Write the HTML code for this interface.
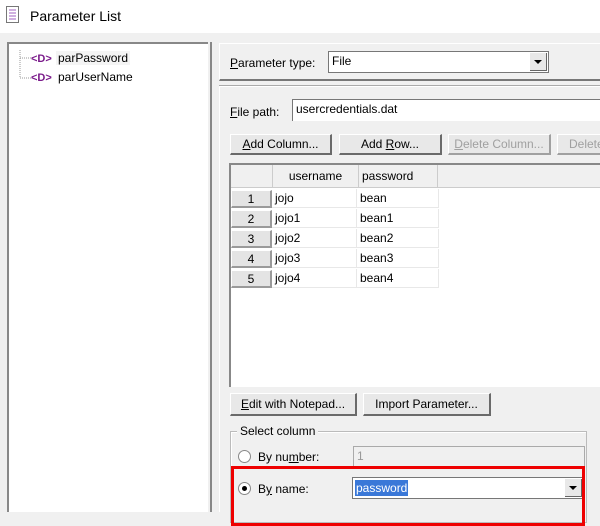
<!DOCTYPE html>
<html><head><style>
body{margin:0;width:600px;height:511px;overflow:hidden;background:#f0f0f0;font-family:"Liberation Sans",sans-serif;font-size:12px;color:#000;position:relative}
.a{position:absolute;white-space:nowrap}
.btn{position:absolute;white-space:nowrap;overflow:hidden;height:21px;background:#e8e8e8;border:1px solid #fff;border-right:2px solid #6a6a6a;border-bottom:2px solid #6a6a6a;box-sizing:border-box;text-align:center;line-height:18px;font-size:12px}
.dis{color:#a0a0a0;border-right-color:#a0a0a0;border-bottom-color:#a0a0a0}
u{text-decoration:underline}
.cell{position:absolute;height:19px;line-height:19px;border-right:1px solid #e8e8e8;border-bottom:1px solid #e8e8e8;box-sizing:border-box;padding-left:3px}
.rh{position:absolute;left:231px;width:41px;height:18px;background:#e4e4e4;border:1px solid #fff;border-right:2px solid #9a9a9a;border-bottom:2px solid #9a9a9a;box-sizing:border-box;text-align:center;line-height:16px;font-size:12px}
</style></head><body>
<div class="a" style="left:0;top:0;width:600px;height:33px;background:#fff"></div>
<svg class="a" style="left:6px;top:6px" width="14" height="18"><rect x="0.5" y="0.5" width="12" height="16" fill="#fff" stroke="#777"/><path d="M3 4h7M3 7h7M3 10h7M3 13h7" stroke="#a060c0"/></svg>
<div class="a" style="left:30px;top:8px;font-size:14px">Parameter List</div>
<div class="a" style="left:7px;top:42px;width:201px;height:470px;background:#fff;border-left:2px solid #888;border-top:2px solid #888;box-sizing:border-box"></div>
<div class="a" style="left:210px;top:42px;width:2px;height:470px;background:#888"></div>
<svg class="a" style="left:18px;top:50px" width="40" height="34"><path d="M2 0v28h12M2 8h12" stroke="#999" stroke-dasharray="1 1" fill="none"/><text x="13" y="12" font-size="11" font-weight="bold" fill="#7a1a8a" font-family="Liberation Sans">&lt;D&gt;</text><text x="13" y="31" font-size="11" font-weight="bold" fill="#7a1a8a" font-family="Liberation Sans">&lt;D&gt;</text></svg>
<div class="a" style="left:56px;top:51px;background:#f4f4f4;padding:0 2px">parPassword</div>
<div class="a" style="left:58px;top:70px">parUserName</div>
<div class="a" style="left:219px;top:43px;width:381px;height:35px;border-top:1px solid #fff;border-left:1px solid #fff;border-bottom:2px solid #777"></div>
<div class="a" style="left:230px;top:56px"><u>P</u>arameter type:</div>
<div class="a" style="left:328px;top:51px;width:221px;height:22px;background:#fff;border:1px solid #777;box-sizing:border-box;padding:2px 3px">File</div>
<div class="a" style="left:530px;top:53px;width:17px;height:18px;background:#e8e8e8;border-right:1px solid #666;border-bottom:1px solid #666;box-sizing:border-box"></div>
<div class="a" style="left:534px;top:60px;width:0;height:0;border-left:4px solid transparent;border-right:4px solid transparent;border-top:4px solid #000"></div>
<div class="a" style="left:219px;top:86px;width:381px;height:425px;border-top:1px solid #fff;border-left:1px solid #fff"></div>
<div class="a" style="left:219px;top:85px;width:381px;height:1px;background:#aaa"></div>
<div class="a" style="left:230px;top:105px"><u>F</u>ile path:</div>
<div class="a" style="left:292px;top:99px;width:308px;height:22px;background:#fff;border-top:1px solid #777;border-left:1px solid #777;box-sizing:border-box;padding:2px 3px">usercredentials.dat</div>
<div class="btn" style="left:230px;top:134px;width:102px"><u>A</u>dd Column...</div>
<div class="btn" style="left:339px;top:134px;width:103px">Add <u>R</u>ow...</div>
<div class="btn dis" style="left:448px;top:134px;width:103px"><u>D</u>elete Column...</div>
<div class="btn dis" style="left:557px;top:134px;width:60px;text-align:left;padding-left:11px">Delete Row...</div>
<div class="a" style="left:229px;top:163px;width:371px;height:224px;background:#fff;border-top:2px solid #888;border-left:2px solid #888;box-sizing:border-box"></div>
<div class="a" style="left:231px;top:165px;width:369px;height:22px;background:#f0f0f0;border-bottom:1px solid #ccc"></div>
<div class="a" style="left:272px;top:165px;width:85px;height:22px;line-height:22px;text-align:center;border-left:1px solid #ccc;border-right:1px solid #ccc">username</div>
<div class="a" style="left:358px;top:165px;width:80px;height:22px;line-height:22px;padding-left:4px;border-right:1px solid #ccc;box-sizing:border-box">password</div>
<div class="rh" style="top:190px">1</div><div class="cell" style="left:272px;top:189px;width:85px">jojo</div><div class="cell" style="left:357px;top:189px;width:82px">bean</div>
<div class="rh" style="top:210px">2</div><div class="cell" style="left:272px;top:209px;width:85px">jojo1</div><div class="cell" style="left:357px;top:209px;width:82px">bean1</div>
<div class="rh" style="top:230px">3</div><div class="cell" style="left:272px;top:229px;width:85px">jojo2</div><div class="cell" style="left:357px;top:229px;width:82px">bean2</div>
<div class="rh" style="top:250px">4</div><div class="cell" style="left:272px;top:249px;width:85px">jojo3</div><div class="cell" style="left:357px;top:249px;width:82px">bean3</div>
<div class="rh" style="top:270px">5</div><div class="cell" style="left:272px;top:269px;width:85px">jojo4</div><div class="cell" style="left:357px;top:269px;width:82px">bean4</div>
<div class="btn" style="left:230px;top:393px;width:127px;height:23px;line-height:20px"><u>E</u>dit with Notepad...</div>
<div class="btn" style="left:363px;top:393px;width:128px;height:23px;line-height:20px">Import Parameter...</div>
<div class="a" style="left:230px;top:431px;width:355px;height:90px;border:1px solid #bbb;box-shadow:1px 1px 0 #fff inset"></div>
<div class="a" style="left:237px;top:424px;background:#f0f0f0;padding:0 3px">Select column</div>
<div class="a" style="left:238px;top:450px;width:11px;height:11px;border-radius:50%;background:#fff;border:1px solid #888"></div>
<div class="a" style="left:258px;top:450px">By nu<u>m</u>ber:</div>
<div class="a" style="left:353px;top:446px;width:232px;height:21px;background:#f0f0f0;border:1px solid #aaa;box-sizing:border-box;color:#999;padding:2px 3px">1</div>
<div class="a" style="left:238px;top:482px;width:11px;height:11px;border-radius:50%;background:#fff;border:1px solid #888"></div>
<div class="a" style="left:242px;top:486px;width:5px;height:5px;border-radius:50%;background:#000"></div>
<div class="a" style="left:258px;top:482px">B<u>y</u> name:</div>
<div class="a" style="left:352px;top:477px;width:232px;height:22px;background:#fff;border:1px solid #777;box-sizing:border-box"></div>
<div class="a" style="left:355px;top:480px;background:#3a78d8;color:#fff;padding:0 1px;line-height:16px">password</div>
<div class="a" style="left:565px;top:479px;width:17px;height:18px;background:#e8e8e8;border-right:1px solid #666;border-bottom:1px solid #666;box-sizing:border-box"></div>
<div class="a" style="left:569px;top:486px;width:0;height:0;border-left:4px solid transparent;border-right:4px solid transparent;border-top:4px solid #000"></div>
<div class="a" style="left:231px;top:466px;width:354px;height:60px;border:3px solid #e00;box-sizing:border-box"></div>
</body></html>
